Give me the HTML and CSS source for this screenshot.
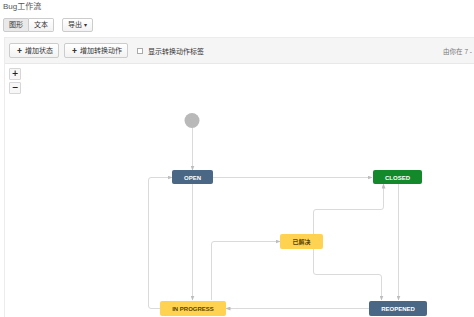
FILE: index.html
```html
<!DOCTYPE html>
<html lang="zh-CN">
  <head>
    <meta charset="UTF-8" />
    <meta name="viewport" content="width=device-width, initial-scale=1.0" />
    <title>Bug工作流</title>
    <link rel="stylesheet" href="styles.css">
  </head>
  <body>
    <p class="title">Bug工作流</p>
    <div class="view-bar">
      <div class="btn-group">
        <button class="btn active">图形</button>
        <button class="btn">文本</button>
      </div>
      <button class="btn">导出 <span class="caret">▾</span></button>
    </div>

    <div class="panel">
      <div class="toolbar">
        <button class="btn tool-button"><span class="plus">✚</span>增加状态</button>
        <button class="btn tool-button"><span class="plus">✚</span>增加转换动作</button>
        <label class="check"><span class="check-box"></span>显示转换动作标签</label>
        <span class="meta">由你在 7 -</span>
      </div>

      <div class="canvas">
        <div class="zoom-control">
          <button class="zoom-button">+</button>
          <button class="zoom-button">−</button>
        </div>

        <svg class="diagram" width="469" height="253" viewBox="5 64 469 253">
          <defs>
            <marker id="arrow" markerUnits="userSpaceOnUse" markerWidth="5" markerHeight="4" refX="4.5" refY="2" orient="auto">
              <path d="M0,0 L5,2 L0,4 z" fill="#bdbdbd" />
            </marker>
          </defs>

          <!-- transitions -->
          <g class="links" fill="none" stroke="#dadada" stroke-width="1" marker-end="url(#arrow)">
            <path d="M192.5,128 V170" />
            <path d="M213,177.5 H372" />
            <path d="M192.5,184 V300" />
            <path d="M160,308.5 H151 Q148.5,308.5 148.5,306 V180 Q148.5,177.5 151,177.5 H172" />
            <path d="M211.5,300 V244 Q211.5,241.5 214,241.5 H280" />
            <path d="M313.5,234 V212 Q313.5,209.5 316,209.5 H381 Q383.5,209.5 383.5,207 V184" />
            <path d="M313.5,249 V272 Q313.5,274.5 316,274.5 H379 Q381.5,274.5 381.5,277 V300" />
            <path d="M398.5,184 V300" />
            <path d="M369,308.5 H226" />
          </g>

          <circle cx="192" cy="120.5" r="7.5" fill="#b9b9b9" />

          <!-- statuses -->
          <g class="node">
            <rect x="172" y="170" width="41" height="14" rx="2" fill="#4a6785" />
            <text x="192.5" y="179.5" class="node-text light">OPEN</text>
          </g>
          <g class="node">
            <rect x="373" y="170" width="49" height="14" rx="2" fill="#14892c" />
            <text x="397.5" y="179.5" class="node-text light">CLOSED</text>
          </g>
          <g class="node">
            <rect x="280" y="234" width="43" height="15" rx="2" fill="#ffd351" />
            <text x="301.5" y="244" class="node-text dark">已解决</text>
          </g>
          <g class="node">
            <rect x="160" y="301" width="66" height="15" rx="2" fill="#ffd351" />
            <text x="193" y="311" class="node-text dark">IN PROGRESS</text>
          </g>
          <g class="node">
            <rect x="369" y="301" width="58" height="15" rx="2" fill="#4a6785" />
            <text x="398" y="311" class="node-text light">REOPENED</text>
          </g>
        </svg>
      </div>
    </div>
  </body>
</html>
```

FILE: styles.css
```css
body {
  margin: 0;
  background-color: white;
  color: #333;
  font-family: "Liberation Sans", "Noto Sans CJK SC", sans-serif;
  font-size: 7px;
  overflow: hidden;
}

.title {
  margin: 0;
  padding: 1px 3px 0;
  height: 13px;
  line-height: 11px;
  font-size: 8px;
  color: #555;
}

.view-bar {
  display: flex;
  gap: 8px;
  margin-top: 4px;
  padding-left: 3px;
}

.btn-group {
  display: flex;
}

.btn {
  height: 14px;
  padding: 0 5px;
  border: 1px solid #ccc;
  border-radius: 2px;
  background: linear-gradient(#fff, #f2f2f2);
  color: #333;
  font-family: inherit;
  font-size: 7px;
  line-height: 12px;
  cursor: pointer;
}

.btn-group .btn {
  border-radius: 0;
}

.btn-group .btn:first-child {
  border-radius: 2px 0 0 2px;
}

.btn-group .btn + .btn {
  border-left: none;
  border-radius: 0 2px 2px 0;
}

.btn.active {
  background: #e9e9e9;
}

.caret {
  font-size: 6px;
}

.panel {
  margin-top: 5px;
  margin-left: 4px;
  border-left: 1px solid #ececec;
  border-top: 1px solid #ececec;
}

.toolbar {
  display: flex;
  align-items: center;
  height: 26px;
  padding: 0 2px 0 4px;
  background-color: #f5f5f5;
  border-bottom: 1px solid #e8e8e8;
  box-sizing: border-box;
}

.tool-button {
  height: 15px;
  padding: 0 5px 0 7px;
  margin-right: 5px;
}

.plus {
  margin-right: 3px;
  font-size: 5px;
  vertical-align: 1px;
}

.check {
  display: flex;
  align-items: center;
  margin-left: 4px;
  color: #333;
}

.check-box {
  width: 4px;
  height: 4px;
  margin-right: 5px;
  border: 1px solid #aaa;
  background: white;
}

.meta {
  margin-left: auto;
  white-space: nowrap;
  color: #777;
  font-size: 6.5px;
}

.canvas {
  position: relative;
  height: 253px;
}

.diagram {
  display: block;
}

.zoom-control {
  position: absolute;
  top: 4px;
  left: 4px;
  display: flex;
  flex-direction: column;
  gap: 2px;
}

.zoom-button {
  width: 12px;
  height: 12px;
  padding: 0;
  border: 1px solid #d6d6d6;
  border-radius: 1px;
  background: #f7f7f7;
  color: #222;
  font-family: "DejaVu Sans", sans-serif;
  font-size: 8px;
  font-weight: bold;
  line-height: 10px;
}

.node-text {
  font-family: "Liberation Sans", "Noto Sans CJK SC", sans-serif;
  font-size: 6px;
  font-weight: bold;
  text-anchor: middle;
}

.light {
  fill: white;
}

.dark {
  fill: #594300;
}
```
